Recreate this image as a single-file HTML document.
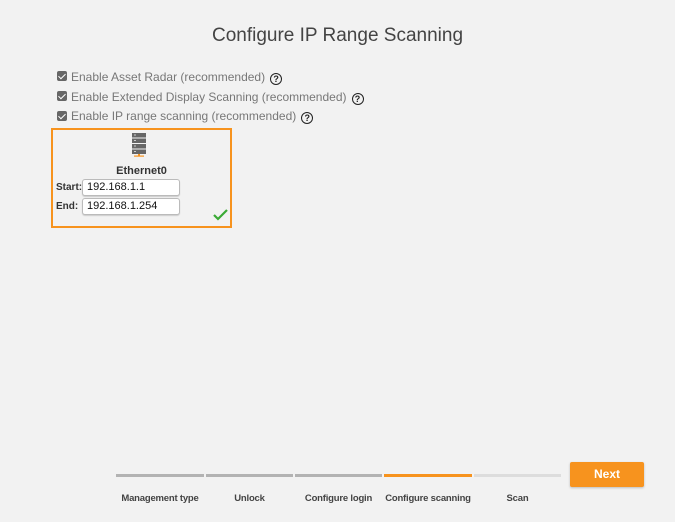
<!DOCTYPE html>
<html><head><style>
body{margin:0;width:675px;height:522px;background:#f2f2f2;font-family:"Liberation Sans",sans-serif;position:relative;overflow:hidden}
.a{position:absolute}
.t{left:0;width:675px;top:25px;text-align:center;font-size:19px;color:#444}
.cb{left:57px;width:10px;height:10px;background:#666;border-radius:2px}
.cb:after{content:"";position:absolute;left:3px;top:1px;width:3px;height:6px;border:solid #fff;border-width:0 1.5px 1.5px 0;transform:rotate(45deg)}
.l{left:71px;font-size:12px;color:#777;white-space:nowrap}
.q{display:inline-block;width:10px;height:10px;border:1.5px solid #222;border-radius:50%;font-size:9px;line-height:10px;text-align:center;color:#222;font-weight:bold;margin-left:5px;vertical-align:-1px}
.box{left:51px;top:128px;width:177px;height:96px;border:2px solid #f7931e}
.in{left:82px;width:92px;height:15px;border:1px solid #bbb;border-radius:3px;background:#fff;font-size:11px;padding-left:4px;line-height:15px;color:#111;box-shadow:0 1px 1px #ccc}
.lb{font-size:10px;color:#333;font-weight:bold;white-space:nowrap}
.bar{top:474px;height:3px;background:#b3b3b3}
.st{top:493px;font-size:9.5px;font-weight:bold;color:#444;text-align:center;white-space:nowrap;letter-spacing:-0.2px}
</style></head><body>
<div class="a t">Configure IP Range Scanning</div>
<div class="a cb" style="top:71px"></div><div class="a l" style="top:70px">Enable Asset Radar (recommended)<span class="q">?</span></div>
<div class="a cb" style="top:91px"></div><div class="a l" style="top:90px">Enable Extended Display Scanning (recommended)<span class="q">?</span></div>
<div class="a cb" style="top:111px"></div><div class="a l" style="top:109px">Enable IP range scanning (recommended)<span class="q">?</span></div>
<div class="a box"></div>
<svg class="a" style="left:132px;top:133px" width="14" height="24"><g fill="#666"><rect x="0" y="0" width="14" height="4.5"/><rect x="0" y="5.5" width="14" height="4.5"/><rect x="0" y="11" width="14" height="4.5"/><rect x="0" y="16.5" width="14" height="4.5"/></g><g fill="#ccc"><rect x="2" y="1.5" width="2" height="1"/><rect x="2" y="7" width="2" height="1"/><rect x="2" y="12.5" width="2" height="1"/><rect x="2" y="18" width="2" height="1"/></g><rect x="6" y="21" width="2" height="2" fill="#f7931e"/><rect x="2" y="22.5" width="10" height="1.2" fill="#f7931e"/></svg>
<div class="a lb" style="left:51px;width:181px;text-align:center;top:165px;font-size:11px">Ethernet0</div>
<div class="a lb" style="left:56px;top:182px">Start:</div>
<div class="a in" style="top:179px">192.168.1.1</div>
<div class="a lb" style="left:56px;top:201px">End:</div>
<div class="a in" style="top:198px">192.168.1.254</div>
<svg class="a" style="left:213px;top:209px" width="15" height="12"><path d="M1 6 L5 10 L14 1" stroke="#3aaa35" stroke-width="2.2" fill="none"/></svg>
<div class="a bar" style="left:116px;width:88px"></div>
<div class="a bar" style="left:206px;width:87px"></div>
<div class="a bar" style="left:295px;width:87px"></div>
<div class="a bar" style="left:384px;width:88px;background:#f7931e"></div>
<div class="a bar" style="left:474px;width:87px;background:#ddd"></div>
<div class="a st" style="left:116px;width:88px">Management type</div>
<div class="a st" style="left:206px;width:87px">Unlock</div>
<div class="a st" style="left:295px;width:87px">Configure login</div>
<div class="a st" style="left:384px;width:88px">Configure scanning</div>
<div class="a st" style="left:474px;width:87px">Scan</div>
<div class="a" style="left:570px;top:462px;width:74px;height:25px;background:#f7931e;border-radius:2px;color:#fff;font-weight:bold;font-size:12px;text-align:center;line-height:25px;box-shadow:0 1px 2px #bbb">Next</div>
</body></html>
